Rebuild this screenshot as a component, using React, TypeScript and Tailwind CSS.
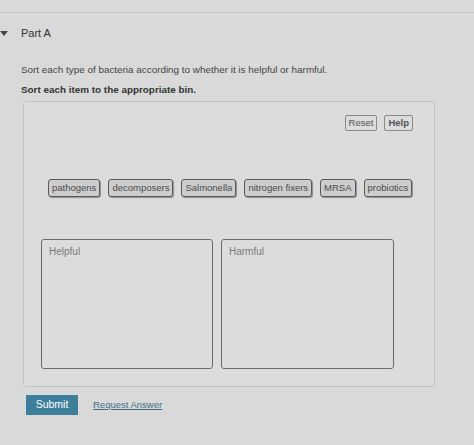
const items = [
  "pathogens",
  "decomposers",
  "Salmonella",
  "nitrogen fixers",
  "MRSA",
  "probiotics",
];

function Chip({ label }: { label: string }) {
  return (
    <div className="h-[18px] px-[3px] flex items-center whitespace-nowrap rounded-[3px] border border-[#5a5a5a] bg-[#cdcdcd] text-[9.5px] text-[#4a4a4a] shadow-[1px_1px_1px_rgba(0,0,0,0.35)]">
      {label}
    </div>
  );
}

function Bin({ title }: { title: string }) {
  return (
    <div className="h-[130px] rounded-[3px] border border-[#6a6a6a] bg-[#dcdcdc] px-[7px] pt-[4px]">
      <p className="text-[10px] text-[#7a7a7a]">{title}</p>
    </div>
  );
}

export default function App() {
  return (
    <div
      className="w-[474px] h-[445px] bg-[#d9d9d9] overflow-hidden text-[#333]"
      style={{ fontFamily: '"Liberation Sans", Arial, sans-serif' }}
    >
      <div className="h-[13px] border-b border-[#c8c8c8]" />

      <div className="flex items-center h-[14px] mt-[13px]">
        <span className="w-[21px] flex">
          <span className="w-0 h-0 border-l-[4px] border-r-[4px] border-t-[5px] border-l-transparent border-r-transparent border-t-[#444]" />
        </span>
        <span className="text-[11px] text-[#333]">Part A</span>
      </div>

      <div className="pl-[21px]">
        <p className="mt-[24px] text-[9.9px] text-[#444] leading-[12px]">
          Sort each type of bacteria according to whether it is helpful or harmful.
        </p>
        <p className="mt-[8px] text-[9.9px] font-bold text-[#333] leading-[12px]">
          Sort each item to the appropriate bin.
        </p>
      </div>

      <div className="ml-[23px] mt-[5px] w-[412px] h-[286px] rounded-[3px] border border-[#c2c2c2] bg-[#dcdcdc] px-[17px] pt-[13px]">
        <div className="flex justify-end gap-[7px] pr-[4px]">
          <button className="h-[16px] px-[3px] rounded-[2px] border border-[#8a8a8a] bg-[#dcdcdc] text-[9.5px] text-[#555]">
            Reset
          </button>
          <button className="h-[16px] px-[3px] rounded-[2px] border border-[#8a8a8a] bg-[#dcdcdc] text-[9.5px] font-bold text-[#555]">
            Help
          </button>
        </div>

        <div className="flex gap-[8px] pl-[7px] mt-[48px]">
          {items.map((it) => (
            <Chip key={it} label={it} />
          ))}
        </div>

        <div className="grid grid-cols-[172px_173px] gap-[8px] mt-[42px]">
          <Bin title="Helpful" />
          <Bin title="Harmful" />
        </div>
      </div>

      <div className="flex items-center mt-[8px] pl-[26px]">
        <button className="h-[20px] w-[52px] bg-[#3d7f9a] text-white text-[10.5px]">
          Submit
        </button>
        <a className="ml-[15px] text-[9.5px] text-[#3d6f85] underline">Request Answer</a>
      </div>
    </div>
  );
}
